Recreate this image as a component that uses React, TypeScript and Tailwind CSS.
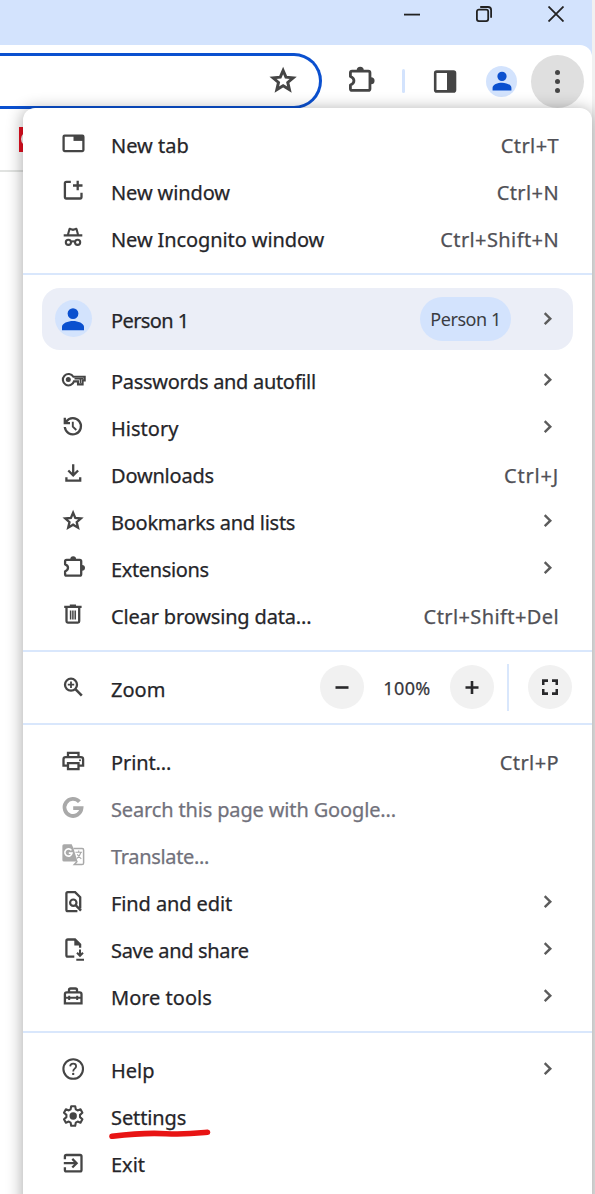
import React from "react";
import { clsx } from "clsx";

interface IconProps {
  children: React.ReactNode;
  className?: string;
}

// All menu glyphs share the same 28px box
function Icon({ children, className }: IconProps) {
  return (
    <svg
      viewBox="0 0 28 28"
      fill="none"
      stroke="currentColor"
      strokeWidth="2.3"
      className={clsx("shrink-0", className)}
    >
      {children}
    </svg>
  );
}

const puzzle = (
  <>
    <path
      d="M7.5 5.9H20.8Q22.2 5.9 22.2 7.3V20.3Q22.2 21.7 20.8 21.7H7.5Q6.1 21.7 6.1 20.3V17.3Q9 16.2 9 13.8Q9 11.4 6.1 10.3V7.3Q6.1 5.9 7.5 5.9Z"
      strokeLinejoin="round"
    />
    <path
      d="M11.3 5.2a2.9 3 0 0 1 5.8 0zM23 10.9a3 2.9 0 0 1 0 5.8z"
      fill="currentColor"
      stroke="none"
    />
  </>
);

const star = (
  <path d="M14.1 5.8 16.3 11 21.9 11.5 17.7 15.1 19 20.7 14.1 17.7 9.2 20.7 10.5 15.1 6.3 11.5 11.9 11Z" />
);

const person = (
  <path
    d="M14 3.2a5.4 5.4 0 1 1 0 10.8a5.4 5.4 0 0 1 0-10.8ZM3 25.2v-3.4c0-3.6 6-5.9 11-5.9s11 2.3 11 5.9v3.4Z"
    fill="currentColor"
    stroke="none"
  />
);

const icons = {
  tab: (
    <>
      <rect x="4.6" y="5.7" width="19.8" height="15.4" rx="1" />
      <path d="M14.5 5.5H24.5V10.9H14.5Z" fill="currentColor" stroke="none" />
    </>
  ),
  window: (
    <path d="M11.8 4.9H7.3Q5.9 4.9 5.9 6.3V20.1Q5.9 21.5 7.3 21.5H21.1Q22.5 21.5 22.5 20.1V15.8M18.7 3.7V13.2M14 8.5H23.5" />
  ),
  incognito: (
    <>
      <path
        d="M4.7 11.4H23.3M8.9 11 10.4 5.3Q10.7 4.6 11.5 5L14 5.8L16.5 5Q17.3 4.6 17.6 5.3L19.1 11"
        strokeWidth="2.1"
      />
      <circle cx="9.4" cy="18.3" r="2.6" strokeWidth="2.1" />
      <circle cx="18.6" cy="18.3" r="2.6" strokeWidth="2.1" />
      <path d="M12 18Q14 16.6 16 18" strokeWidth="2" />
    </>
  ),
  key: (
    <>
      <path
        d="M14.4 10.7H25.7V14.4H23.6V18.4H19V15.4H15A5.7 5.7 0 1 1 14.4 10.7Z"
        strokeWidth="2.1"
      />
      <circle cx="9.3" cy="13.6" r="2.5" fill="currentColor" stroke="none" />
      <path d="M15.5 12.8H24.5M21.4 13V17.2" strokeWidth="1.4" />
    </>
  ),
  history: (
    <>
      <path d="M5.8 14A8.1 8.1 0 1 0 7.3 8.5L5.5 10.3M5.8 4.8V10.1H11" />
      <path d="M13.8 8.8V13.6L17.3 17" strokeWidth="1.9" />
    </>
  ),
  download: (
    <path d="M14.2 4.2V15.3M9.3 10.5 14.2 15.4 19.1 10.5M7.4 17.2V20.6H21.2V17.2" />
  ),
  star,
  puzzle,
  trash: (
    <>
      <path d="M7.5 6.4V20.3Q7.5 21.6 8.8 21.6H18.9Q20.2 21.6 20.2 20.3V6.4M5.2 5.8H22.6M10.8 4.7H17" />
      <path d="M11.6 9.4V18.5M13.9 9.4V18.5M16.2 9.4V18.5" strokeWidth="1.5" />
    </>
  ),
  zoom: (
    <>
      <circle cx="12" cy="11.7" r="6" />
      <path d="M16.4 16.2 22.8 22.6" strokeWidth="2.6" />
      <path d="M12 8.5V14.9M8.8 11.7H15.2" strokeWidth="1.8" />
    </>
  ),
  print: (
    <>
      <path d="M9 10V5.8H19.5V10M8.8 18.7H4.5V12.3Q4.5 10.2 6.6 10.2H21.9Q24.1 10.2 24.1 12.3V18.7H19.7M9 16.2H19.5V22.2H9Z" />
      <circle cx="21" cy="13.3" r="1" fill="currentColor" stroke="none" />
    </>
  ),
  google: (
    <path d="M20.4 7.8A8.5 8.5 0 1 0 22.5 14.2H14.2" strokeWidth="3.8" />
  ),
  translate: (
    <>
      <path
        d="M5 3.2H12.7L14.5 7.5L18.5 20.5H5Q3.4 20.5 3.4 18.9V4.8Q3.4 3.2 5 3.2Z"
        fill="currentColor"
        stroke="none"
      />
      <path d="M14.5 7.6H23.2Q24.6 7.6 24.6 9V22Q24.6 23.6 23 23.6H15.3L18.3 20.3" strokeWidth="1.5" />
      <path d="M16.5 11.2H23M19.7 9.6V11.2M21.8 11.5Q20.8 15.4 17.8 17.5M18.2 13.4 22.3 18" strokeWidth="1.1" />
      <path d="M12.4 9.4A3.6 3.6 0 1 0 13 12.1H9.8" stroke="white" strokeWidth="1.6" />
    </>
  ),
  find: (
    <>
      <path d="M18.4 23.2H8.8Q7.4 23.2 7.4 21.8V5.5Q7.4 4.1 8.8 4.1H16.1L21.2 9.2V20.4" />
      <circle cx="14.3" cy="14.7" r="3.2" strokeWidth="2.2" />
      <path d="M16.6 17.2 22 22.6" strokeWidth="2.4" />
    </>
  ),
  save: (
    <>
      <path d="M15.3 21.7H8.8Q7.4 21.7 7.4 20.3V5.9Q7.4 4.5 8.8 4.5H16L21.1 9.6V12.8" />
      <path d="M15.3 4.2V10.5H21.5Z" fill="currentColor" stroke="none" />
      <path d="M21 14.5V21M18 17.8 21 20.8 24 17.8M17.3 24.7H25" strokeWidth="2" />
    </>
  ),
  tools: (
    <>
      <path d="M10 10.2V8.1Q10 6.5 11.6 6.5H16.4Q18 6.5 18 8.1V10.2M5.9 12.2Q5.9 10.4 7.7 10.4H20.7Q22.5 10.4 22.5 12.2V21.3H5.9Z" />
      <path d="M5.8 15.8H22.6M10.2 13.7V18M18.2 13.7V18" strokeWidth="2" />
    </>
  ),
  help: (
    <>
      <circle cx="14.2" cy="14" r="9.8" strokeWidth="2.1" />
      <path
        d="M11.2 11.4Q11.3 8.7 14.2 8.7Q17.1 8.7 17.1 11.2Q17.1 12.5 15.7 13.6Q14.2 14.8 14.2 16.4"
        strokeWidth="1.8"
      />
      <circle cx="14.2" cy="18.9" r="1.2" fill="currentColor" stroke="none" />
    </>
  ),
  settings: (
    <>
      <path
        d="M12.2 4.3H16.2L16.8 7.4L18.6 8.4L21.5 7.3L23.4 10.8L21 12.9V15.1L23.4 17.2L21.5 20.7L18.6 19.6L16.8 20.6L16.2 23.7H12.2L11.6 20.6L9.8 19.6L6.9 20.7L5 17.2L7.4 15.1V12.9L5 10.8L6.9 7.3L9.8 8.4L11.6 7.4Z"
        strokeWidth="2.1"
        strokeLinejoin="round"
      />
      <circle cx="14.2" cy="14" r="3.7" fill="currentColor" stroke="none" />
    </>
  ),
  exit: (
    <path d="M5.9 10.2V7.4Q5.9 6 7.3 6H21.1Q22.5 6 22.5 7.4V21Q22.5 22.4 21.1 22.4H7.3Q5.9 22.4 5.9 21V18.2M4.8 14.2H17.2M13.3 9.9 17.6 14.2 13.3 18.5" />
  ),
};

interface MenuItem {
  icon: keyof typeof icons;
  label: string;
  labelClass?: string;
  shortcut?: string;
  shortcutClass?: string;
  arrow?: boolean;
  disabled?: boolean;
}

const tabItems: MenuItem[] = [
  { icon: "tab", label: "New tab", shortcut: "Ctrl+T" },
  { icon: "window", label: "New window", labelClass: "tracking-[-0.1px]", shortcut: "Ctrl+N" },
  {
    icon: "incognito",
    label: "New Incognito window",
    labelClass: "tracking-[-0.1px]",
    shortcut: "Ctrl+Shift+N",
  },
];

const browsingItems: MenuItem[] = [
  { icon: "key", label: "Passwords and autofill", labelClass: "tracking-[-0.31px]", arrow: true },
  { icon: "history", label: "History", arrow: true },
  {
    icon: "download",
    label: "Downloads",
    labelClass: "tracking-[-0.2px]",
    shortcut: "Ctrl+J",
    shortcutClass: "tracking-[0.8px]",
  },
  { icon: "star", label: "Bookmarks and lists", labelClass: "tracking-[-0.27px]", arrow: true },
  { icon: "puzzle", label: "Extensions", labelClass: "tracking-[-0.35px]", arrow: true },
  {
    icon: "trash",
    label: "Clear browsing data...",
    labelClass: "tracking-[-0.16px]",
    shortcut: "Ctrl+Shift+Del",
  },
];

const pageItems: MenuItem[] = [
  { icon: "print", label: "Print...", labelClass: "tracking-[-0.1px]", shortcut: "Ctrl+P" },
  {
    icon: "google",
    label: "Search this page with Google...",
    labelClass: "tracking-[-0.15px]",
    disabled: true,
  },
  { icon: "translate", label: "Translate...", labelClass: "tracking-[-0.33px]", disabled: true },
  { icon: "find", label: "Find and edit", labelClass: "tracking-[-0.1px]", arrow: true },
  { icon: "save", label: "Save and share", labelClass: "tracking-[-0.32px]", arrow: true },
  { icon: "tools", label: "More tools", arrow: true },
];

const appItems: MenuItem[] = [
  { icon: "help", label: "Help", arrow: true },
  { icon: "settings", label: "Settings", labelClass: "tracking-[-0.1px]" },
  { icon: "exit", label: "Exit" },
];

function Chevron() {
  return (
    <svg viewBox="0 0 10 14" fill="none" className="h-3.5 w-2.5 shrink-0 text-[#5c5c5c]">
      <path d="M1.7 1.2 7.3 6.7 1.7 12.2" stroke="currentColor" strokeWidth="2.4" />
    </svg>
  );
}

function Row({ item }: { item: MenuItem }) {
  return (
    <div className="flex h-[46.9px] items-center pr-[34px] pl-9">
      <Icon className={clsx("h-7 w-7", item.disabled ? "text-[#a9a9a9]" : "text-[#454545]")}>
        {icons[item.icon]}
      </Icon>
      <span
        className={clsx(
          "pt-1 pl-6 whitespace-nowrap",
          item.labelClass,
          item.disabled ? "text-[#71717b]" : "text-[#252529]",
        )}
      >
        {item.label}
      </span>
      {item.shortcut && (
        <span
          className={clsx(
            "-mr-px ml-auto pt-1 text-[#505056]",
            item.shortcutClass ?? "tracking-[0.4px]",
          )}
        >
          {item.shortcut}
        </span>
      )}
      {item.arrow && (
        <span className="mr-[5px] ml-auto">
          <Chevron />
        </span>
      )}
    </div>
  );
}

function Section({ items, className }: { items: MenuItem[]; className?: string }) {
  return (
    <div className={className}>
      {items.map((item) => (
        <Row key={item.label} item={item} />
      ))}
    </div>
  );
}

function Divider() {
  return <div className="h-0.5 shrink-0 bg-[#d9e7fc]" />;
}

function RoundButton({ d, className }: { d: string; className?: string }) {
  return (
    <button
      className={clsx(
        "flex h-11 w-11 shrink-0 items-center justify-center rounded-full bg-[#f1f1f1] text-[#29292b]",
        className,
      )}
    >
      <svg viewBox="0 0 16 16" fill="none" stroke="currentColor" strokeWidth="2.6" className="h-4 w-4">
        <path d={d} />
      </svg>
    </button>
  );
}

function ChromeMenu() {
  return (
    <div className="absolute top-[108px] left-[23px] flex h-[1100px] w-[569px] flex-col rounded-t-xl bg-white text-[20px] leading-7 shadow-[0_2px_16px_1px_rgba(0,0,0,0.32)] [-webkit-text-stroke:0.25px]">
      <Section items={tabItems} className="pt-[13px] pb-[11.3px]" />
      <Divider />

      <div className="mx-[19px] mt-[13px] mb-[7px] flex h-[62px] shrink-0 items-center rounded-[18px] bg-[#ebeef7] pr-5 pl-[12.5px]">
        <span className="flex h-[37px] w-[37px] items-center justify-center rounded-full bg-[#d3e3fd] text-[#0b50cf]">
          <Icon className="h-7 w-7">{person}</Icon>
        </span>
        <span className="pt-[5px] pl-[19.5px] tracking-[-0.6px] text-[#252529]">Person 1</span>
        <span className="ml-auto flex h-[44px] w-[91px] items-center justify-center rounded-full bg-[#d3e3fd] text-[18px] tracking-[-0.45px] text-[#3a3c42] [-webkit-text-stroke:0]">
          Person 1
        </span>
        <span className="ml-[32px]">
          <Chevron />
        </span>
      </div>
      <Section items={browsingItems} className="pb-[11.6px]" />
      <Divider />

      <div className="flex h-[71px] shrink-0 items-center pr-5 pl-9">
        <Icon className="h-7 w-7 text-[#454545]">{icons.zoom}</Icon>
        <span className="pt-[5px] pl-6 text-[#252529]">Zoom</span>
        <RoundButton d="M1.5 8.5H14.5" className="ml-auto" />
        <span className="w-[86px] pt-0.5 text-center text-[18px] tracking-[0.4px] text-[#37373d]">100%</span>
        <RoundButton d="M1.5 8.5H14.5M8 2V15" />
        <div className="mr-[19px] ml-[13px] h-[47px] w-0.5 bg-[#d9e7fc]" />
        <RoundButton d="M1.2 6V1.6H6M10 1.6H14.8V6M14.8 10V14.6H10M6 14.6H1.2V10" />
      </div>
      <Divider />

      <Section items={pageItems} className="pt-[13px] pb-[11.6px]" />
      <Divider />
      <Section items={appItems} className="pt-[12.9px]" />

      {/* hand-drawn mark under Settings */}
      <svg viewBox="0 0 102 12" fill="none" className="absolute top-[1019px] left-[86px] h-3 w-[102px]">
        <path
          d="M3 9.3C25 6.6 40 5.6 57 6.7C75 7.8 85 6.6 98.5 5.3"
          stroke="#e81414"
          strokeWidth="5.6"
          strokeLinecap="round"
        />
      </svg>
    </div>
  );
}

function TitleBar() {
  return (
    <div className="flex h-[45px] items-start justify-end gap-14 bg-[#d3e3fd] pt-1.5 pr-[28px] text-[#222]">
      <svg viewBox="0 0 16 16" fill="none" stroke="currentColor" strokeWidth="1.8" className="h-4 w-4">
        <path d="M0 8.6H16" />
      </svg>
      <svg viewBox="0 0 16 16" fill="none" stroke="currentColor" strokeWidth="1.8" className="h-4 w-4">
        <rect x="0.9" y="3.6" width="11.3" height="11.5" rx="2" />
        <path d="M4.2 1H12Q15.1 1 15.1 4V11.8" />
      </svg>
      <svg viewBox="0 0 16 16" fill="none" stroke="currentColor" strokeWidth="1.8" className="h-4 w-4">
        <path d="M0.5 0.5 15.5 15.5M15.5 0.5 0.5 15.5" />
      </svg>
    </div>
  );
}

function Toolbar() {
  return (
    <div className="bg-[#d3e3fd]">
      <div className="flex h-[72px] items-start rounded-tr-xl bg-white pt-2">
        <div className="flex h-[56px] w-[322px] items-center justify-end rounded-r-full border-[3px] border-l-0 border-[#0b50cf] pr-[18px] text-[#454545]">
          <Icon className="h-9 w-9">{star}</Icon>
        </div>
        <div className="flex h-14 items-center text-[#454545]">
          <Icon className="ml-[21px] h-[34px] w-[34px]">{puzzle}</Icon>
          <div className="ml-[25px] h-6 w-[3px] rounded-full bg-[#d3e3fd]" />
          <svg viewBox="0 0 24 24" fill="none" className="ml-[28px] h-6 w-6">
            <rect x="2.2" y="2.6" width="19.8" height="19.8" rx="1.5" stroke="currentColor" strokeWidth="2.6" />
            <path d="M14 2.4H22V22.4H14Z" fill="currentColor" />
          </svg>
          <span className="ml-[29px] flex h-[31px] w-[31px] items-center justify-center rounded-full bg-[#d3e3fd] text-[#0b50cf]">
            <Icon className="h-6 w-6">{person}</Icon>
          </span>
          <span className="ml-[14px] flex h-[53px] w-[53px] flex-col items-center justify-center gap-1 rounded-full bg-[#dfdfdf]">
            <span className="h-[5px] w-[5px] rounded-full bg-current" />
            <span className="h-[5px] w-[5px] rounded-full bg-current" />
            <span className="h-[5px] w-[5px] rounded-full bg-current" />
          </span>
        </div>
      </div>
    </div>
  );
}

function App() {
  return (
    <div className="relative flex h-[1194px] w-[595px] overflow-hidden bg-[#f1f1f1] font-['Noto_Sans','Open_Sans',sans-serif]">
      <div className="w-[592px] bg-white">
        <TitleBar />
        <Toolbar />
        {/* bookmarks bar */}
        <div className="h-[55px] border-b-2 border-[#e1e3e1] pt-[9.5px] pl-[18.5px]">
          <div className="flex h-[25px] w-[25px] items-center justify-center bg-[#e50f20]">
            <div className="h-3.5 w-5 rounded-full bg-white" />
          </div>
        </div>
      </div>
      <ChromeMenu />
    </div>
  );
}

export default App;
